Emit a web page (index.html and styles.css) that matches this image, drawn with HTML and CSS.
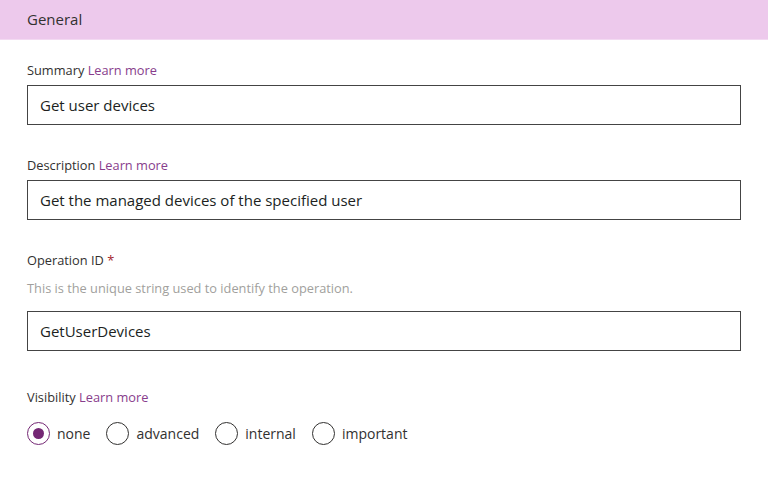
FILE: index.html
```html
<!DOCTYPE html>
<html>
<head>
<meta charset="utf-8">
<link rel="stylesheet" href="styles.css">
</head>
<body>
<div class="header">General</div>
<div class="content">
  <div class="field">
    <div class="label">Summary <a class="link">Learn more</a></div>
    <div class="input">Get user devices</div>
  </div>
  <div class="field">
    <div class="label">Description <a class="link">Learn more</a></div>
    <div class="input">Get the managed devices of the specified user</div>
  </div>
  <div class="field">
    <div class="label">Operation ID <span class="req">*</span></div>
    <div class="hint">This is the unique string used to identify the operation.</div>
    <div class="input">GetUserDevices</div>
  </div>
  <div class="field vis">
    <div class="label">Visibility <a class="link">Learn more</a></div>
    <div class="radios">
      <div class="radio"><span class="circle checked"></span><span>none</span></div>
      <div class="radio"><span class="circle"></span><span>advanced</span></div>
      <div class="radio"><span class="circle"></span><span>internal</span></div>
      <div class="radio"><span class="circle"></span><span>important</span></div>
    </div>
  </div>
</div>
</body>
</html>
```
FILE: styles.css
```css
* { box-sizing: border-box; }
body {
  margin: 0;
  font-family: "Open Sans", "Noto Sans", sans-serif;
  background: #fff;
  color: #323130;
}
.header {
  height: 40px;
  background: #edc9ec;
  padding-left: 27px;
  font-size: 15px;
  font-weight: 500;
  line-height: 39px;
  color: #323130;
  border-bottom: 1px solid #f3daf2;
}
.content {
  padding: 20px 27px 0 27px;
}
.field { margin-bottom: 30px; }
.label {
  font-size: 12.8px;
  line-height: 20px;
  margin-bottom: 5px;
  color: #323130;
}
.link { color: #883d8c; }
.req { color: #a4262c; }
.hint {
  font-size: 12.8px;
  line-height: 20px;
  color: #a19f9d;
  margin-top: 8px;
  margin-bottom: 13px;
}
.input {
  height: 40px;
  border: 1px solid #444;
  padding-left: 12px;
  font-size: 15px;
  line-height: 38px;
  color: #201f1e;
}
.field.vis { margin-top: 36px; }
.vis .label { margin-bottom: 14px; }
.radios {
  display: flex;
  align-items: center;
  gap: 16px;
  font-size: 14px;
  color: #323130;
}
.radio {
  display: flex;
  align-items: center;
  gap: 7px;
  height: 24px;
}
.circle {
  width: 23px;
  height: 23px;
  border-radius: 50%;
  border: 1px solid #323130;
  display: flex;
  align-items: center;
  justify-content: center;
}
.circle.checked { border: 1.5px solid #742774; }
.circle.checked::after {
  content: "";
  width: 11px;
  height: 11px;
  border-radius: 50%;
  background: #742774;
}
```
